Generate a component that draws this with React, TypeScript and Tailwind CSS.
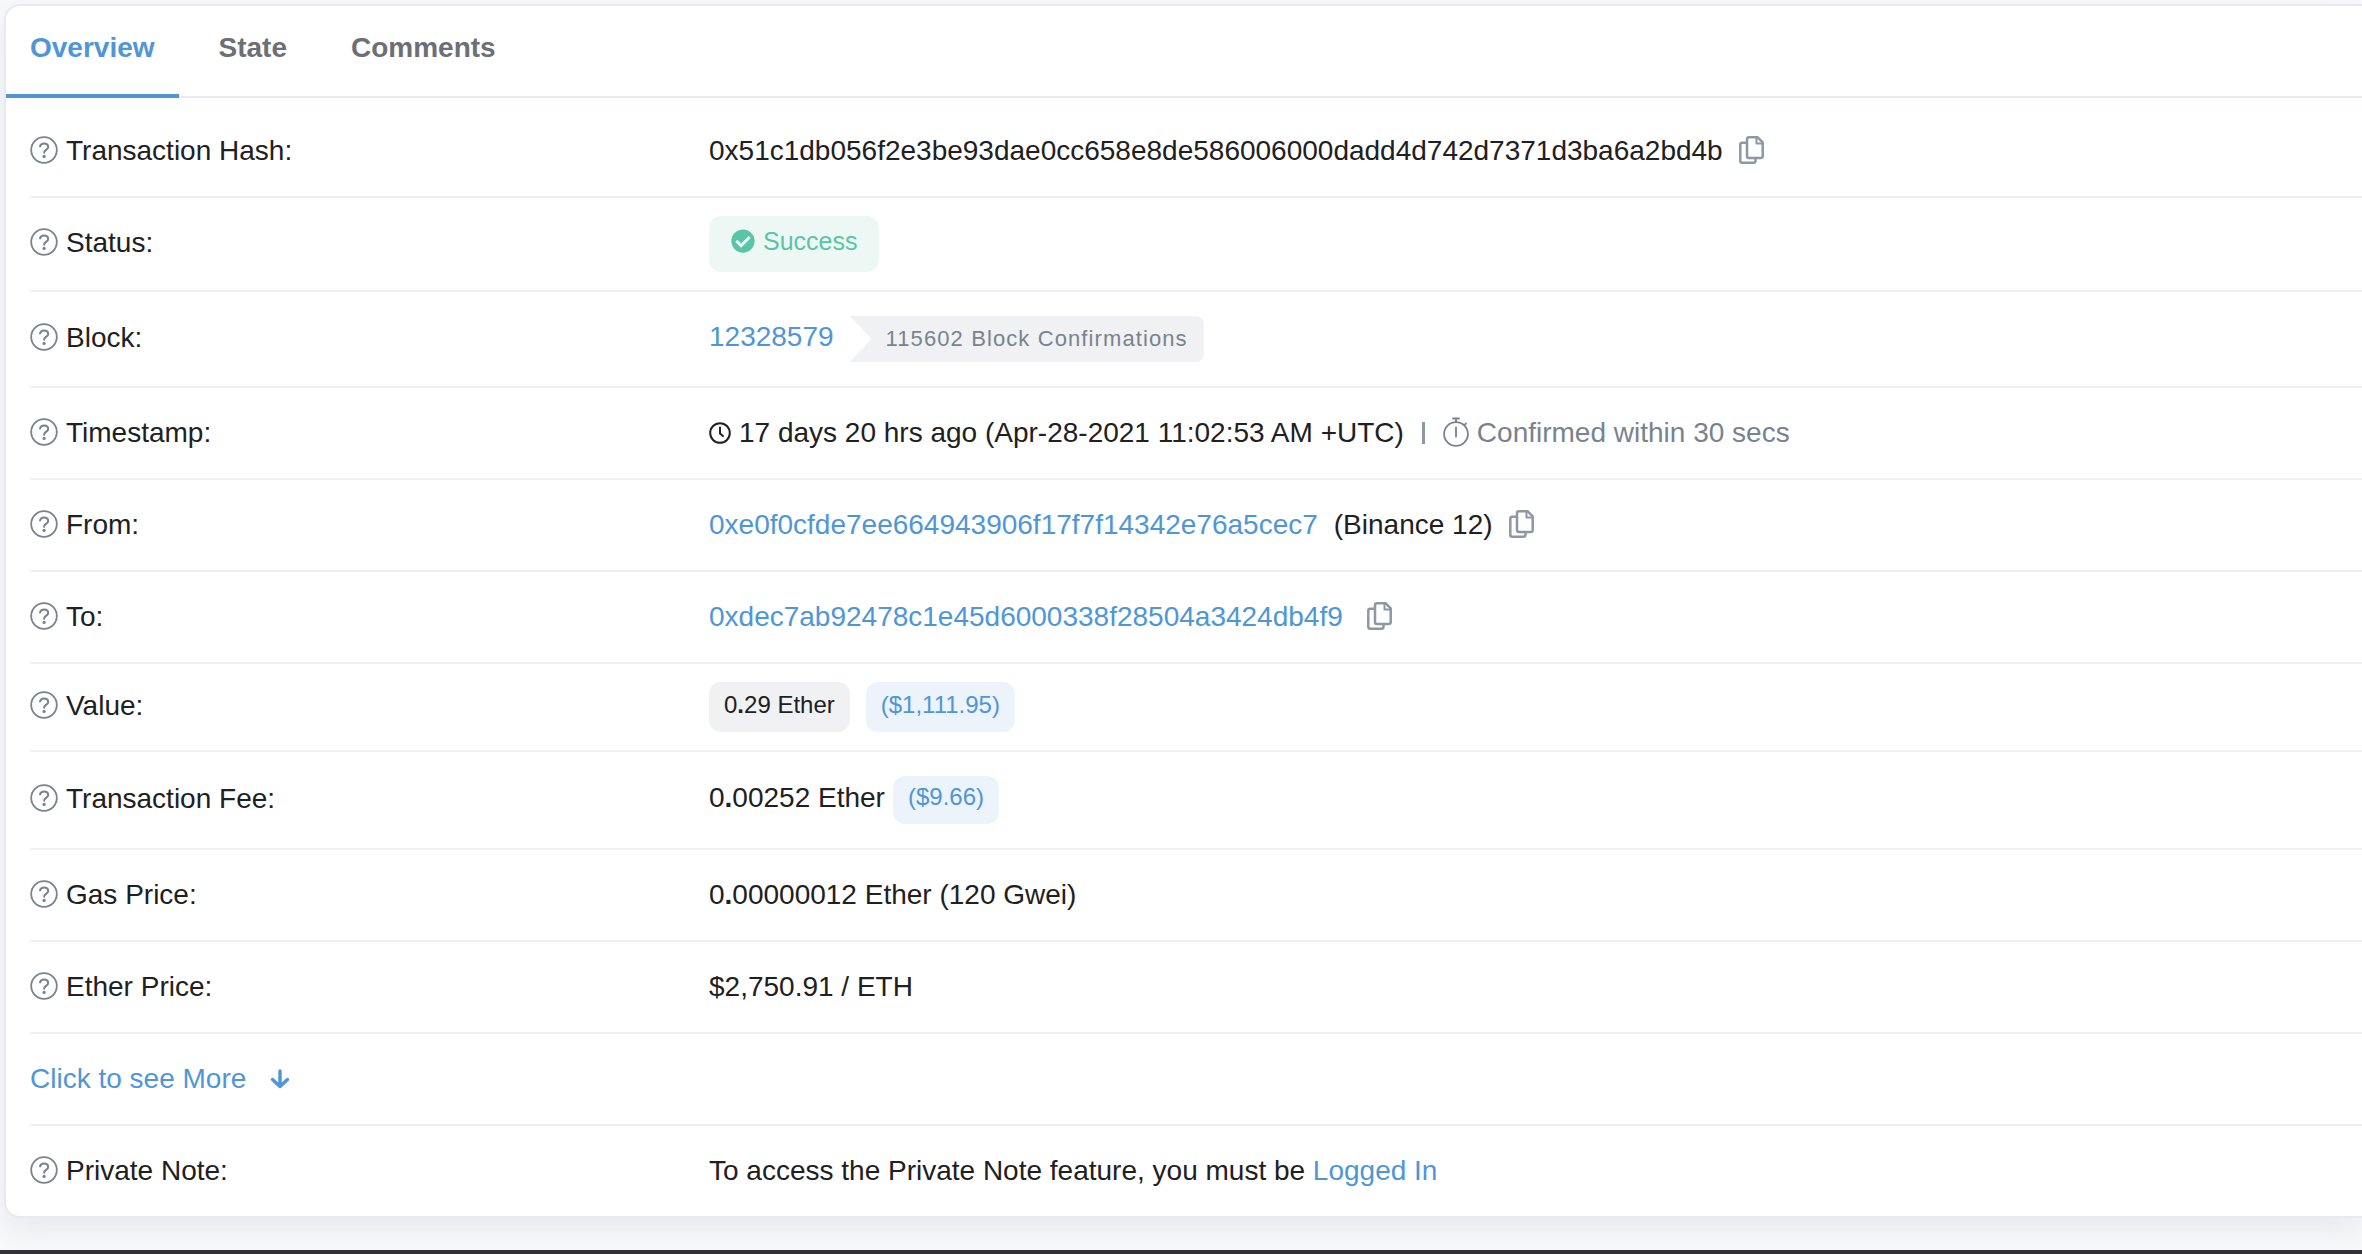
import { useState } from 'react';
import type { ReactNode } from 'react';
import { FaCheckCircle } from 'react-icons/fa';

const tabs = ['Overview', 'State', 'Comments'];

const HelpIcon = () => (
  <svg viewBox="0 0 28 28" className="mb-0.5 size-7 shrink-0 text-[#77838f]" fill="none" stroke="currentColor" aria-hidden="true">
    <circle cx="14" cy="14" r="12.8" strokeWidth="1.8" />
    <path d="M10 10.4c.5-1.9 2-3 4.1-3 2.3 0 4.1 1.4 4.1 3.5 0 2.9-4 3-4 5.4v.4" strokeWidth="2" strokeLinecap="round" />
    <circle cx="14.1" cy="20.4" r="1.6" fill="currentColor" stroke="none" />
  </svg>
);

const CopyIcon = () => (
  <svg viewBox="0 0 25 28" className="mb-0.5 h-7 w-[25px]" fill="none" stroke="currentColor" strokeWidth="2.5" strokeLinejoin="round" aria-hidden="true">
    <path d="M7.500 6.800H3.300a2 2 0 0 0-2 2v15.900a2 2 0 0 0 2 2h11.200a2 2 0 0 0 2-2v-2.300" />
    <path d="M10 1.300h8.700l5 5V20a2 2 0 0 1-2 2H10a2 2 0 0 1-2-2V3.300a2 2 0 0 1 2-2z" />
    <path d="M17.500 1.500v6h6" strokeWidth="2" />
  </svg>
);

const ClockIcon = () => (
  <svg viewBox="0 0 22 22" className="mr-2 size-[22px]" fill="none" stroke="currentColor" strokeWidth="2" strokeLinecap="round" aria-hidden="true">
    <circle cx="11" cy="11" r="9.8" />
    <path d="M11 5.500V11.500l3 2.500" />
  </svg>
);

const StopwatchIcon = () => (
  <svg viewBox="0 0 26 30" className="mb-0.5 h-[30px] w-[26px] text-[#77838f]" fill="none" stroke="currentColor" strokeWidth="1.8" strokeLinecap="round" aria-hidden="true">
    <circle cx="13" cy="17" r="11.9" />
    <path d="M10 1.500h6M13 1.500V5M13 10.500v9M21.500 8l1.500-1.500" />
  </svg>
);

const ArrowDownIcon = () => (
  <svg viewBox="0 0 20 20" className="size-5" fill="none" stroke="currentColor" strokeWidth="3.4" strokeLinecap="round" strokeLinejoin="round" aria-hidden="true">
    <path d="M10 2v15.500M2.500 10.500l7.500 7 7.500-7" />
  </svg>
);

const CopyButton = ({ label }: { label: string }) => (
  <button type="button" aria-label={label} className="text-[#8c98a4]">
    <CopyIcon />
  </button>
);

interface RowProps {
  label: string;
  badge?: boolean;
  children: ReactNode;
}

const Row = ({ label, badge = false, children }: RowProps) => (
  <div className="flex items-center border-b-2 border-[#eeeef4] last:border-b-0">
    <dt className={badge ? 'flex w-[679px] shrink-0 items-center gap-2 pb-0.5' : 'flex w-[679px] shrink-0 items-center gap-2'}>
      <HelpIcon />
      {label}:
    </dt>
    <dd className={badge ? 'flex items-center' : 'flex items-center py-6'}>{children}</dd>
  </div>
);

const App = () => {
  const [activeTab, setActiveTab] = useState('Overview');

  return (
    <div className="min-h-screen bg-[#f8f9fb] font-['Liberation_Sans',Arial,sans-serif] text-[28px] leading-[42px] text-[#1e2022]">
      <div className="overflow-hidden pt-1 pb-8 pl-1">
        <main className="rounded-l-2xl border-2 border-r-0 border-[#e7eaf3] bg-white shadow-[0_12px_30px_rgba(140,152,164,0.16)]">
          <nav className="flex h-[92px] gap-4 border-b-2 border-[#e7eaf3]">
            {tabs.map((tab) => (
              <button
                key={tab}
                type="button"
                onClick={() => setActiveTab(tab)}
                className={
                  tab === activeTab
                    ? '-mb-0.5 border-b-4 border-[#4f96d8] px-6 pb-1 font-bold text-[#4f96d8]'
                    : '-mb-0.5 border-b-4 border-transparent px-6 pb-1 font-bold text-[#6c6f76]'
                }
              >
                {tab}
              </button>
            ))}
          </nav>

          <dl className="pt-2 pl-6">
            <Row label="Transaction Hash">
              <span className="mr-4">0x51c1db056f2e3be93dae0cc658e8de586006000dadd4d742d7371d3ba6a2bd4b</span>
              <CopyButton label="Copy transaction hash" />
            </Row>
            <Row label="Status" badge>
              <span className="my-[18px] flex h-14 items-center gap-2 rounded-xl bg-[#edf8f5] px-[22px] pb-1.5 text-[25px] text-[#5ac5a6]">
                <FaCheckCircle className="size-6" />
                Success
              </span>
            </Row>
            <Row label="Block" badge>
              <a href="#block" className="pb-1 text-[#4f96d8]">12328579</a>
              <span className="my-6 ml-4 flex h-[46px] items-center rounded-r-lg bg-[#f0f1f3] pr-4 pl-9 text-[22px] tracking-wider text-[#77838f] [clip-path:polygon(0_0,100%_0,100%_100%,0_100%,22px_50%)]">
                115602 Block Confirmations
              </span>
            </Row>
            <Row label="Timestamp">
              <ClockIcon />
              17 days 20 hrs ago (Apr-28-2021 11:02:53 AM +UTC)
              <span className="mx-[18px] h-[22px] w-[3px] bg-[#8c98a4]" />
              <StopwatchIcon />
              <span className="ml-2 text-[#77838f]">Confirmed within 30 secs</span>
            </Row>
            <Row label="From">
              <a href="#from" className="text-[#4f96d8]">0xe0f0cfde7ee664943906f17f7f14342e76a5cec7</a>
              <span className="mx-4">(Binance 12)</span>
              <CopyButton label="Copy sender address" />
            </Row>
            <Row label="To">
              <a href="#to" className="mr-6 text-[#4f96d8]">0xdec7ab92478c1e45d6000338f28504a3424db4f9</a>
              <CopyButton label="Copy recipient address" />
            </Row>
            <Row label="Value" badge>
              <span className="my-[18px] mr-4 rounded-xl bg-[#f0f1f3] px-[15px] pt-0.5 pb-1.5 text-2xl leading-[42px]">
                0<b>.</b>29 Ether
              </span>
              <span className="my-[18px] rounded-xl bg-[#ecf3fb] px-[15px] pt-0.5 pb-1.5 text-2xl leading-[42px] text-[#4f96d8]">($1,111.95)</span>
            </Row>
            <Row label="Transaction Fee" badge>
              <span className="pb-1">
                0<b>.</b>00252 Ether
              </span>
              <span className="my-6 ml-2 rounded-xl bg-[#ecf3fb] px-[15px] pb-1.5 text-2xl leading-[42px] text-[#4f96d8]">($9.66)</span>
            </Row>
            <Row label="Gas Price">
              <span>
                0<b>.</b>00000012 Ether (120 Gwei)
              </span>
            </Row>
            <Row label="Ether Price">$2,750.91 / ETH</Row>
            <div className="flex items-center border-b-2 border-[#eeeef4] py-6">
              <button type="button" className="flex items-center gap-6 text-[#4f96d8]">
                Click to see More
                <ArrowDownIcon />
              </button>
            </div>
            <Row label="Private Note">
              To access the Private Note feature, you must be&nbsp;
              <a href="#login" className="text-[#4f96d8]">Logged In</a>
            </Row>
          </dl>
        </main>
      </div>
      <footer className="h-1 bg-[#333238]" />
    </div>
  );
};

export default App;
